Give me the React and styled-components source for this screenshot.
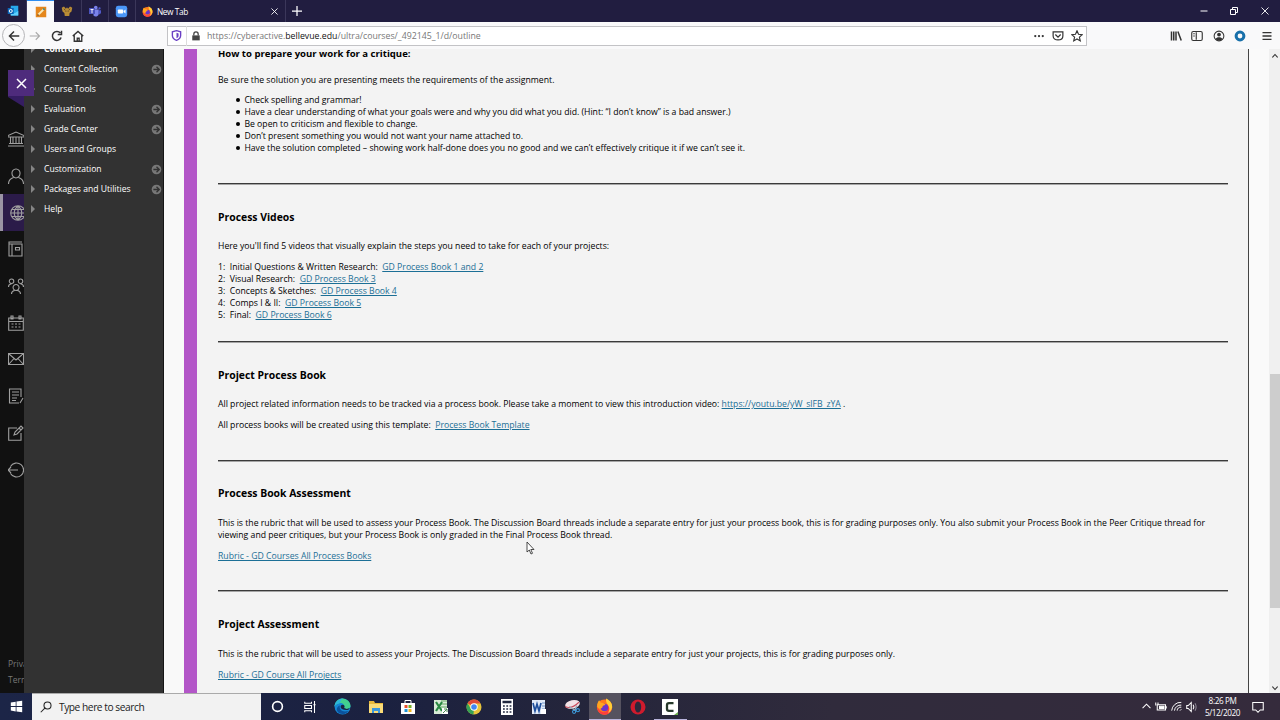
import React from 'react';
import styled, { createGlobalStyle, css } from 'styled-components';

const fonts = {
  page: '"Open Sans", "Noto Sans", sans-serif',
  system: '"Open Sans", "Noto Sans", sans-serif',
};

const colors = {
  titleBar: '#211d40',
  rail: '#111111',
  menu: '#323232',
  purple: '#b356c8',
  link: '#1c6f96',
  page: '#f3f3f3',
};

const GlobalStyle = createGlobalStyle`
  body { margin: 0; overflow: hidden; }
  * { box-sizing: border-box; }
  svg { display: block; flex: none; }
`;

const Screen = styled.div`
  position: relative;
  width: 1280px;
  height: 720px;
  display: flex;
  flex-direction: column;
  overflow: hidden;
  font-family: ${fonts.page};
  font-size: 9px;
`;

/* Browser tabs */
const TitleBar = styled.header`
  height: 22px;
  flex: none;
  display: flex;
  background: ${colors.titleBar};
  color: #fff;
`;

const PinnedTab = styled.div`
  width: 27.2px;
  display: flex;
  align-items: center;
  justify-content: center;
  border-right: 1px solid #3b375a;
  ${({ $active }) =>
    $active &&
    css`
      background: #f9f9fb;
      border-top: 1px solid #2d8cf0;
      border-right: none;
    `};
`;

const OpenTab = styled.div`
  width: 150px;
  display: flex;
  align-items: center;
  padding: 0 7px 0 6px;
  border-right: 1px solid #3b375a;
`;

const TabTitle = styled.span`
  flex: 1;
  padding: 1px 0 0 4px;
  font-size: 8.3px;
  letter-spacing: -0.4px;
`;

const NewTab = styled.div`
  width: 22px;
  display: flex;
  align-items: center;
  justify-content: center;
`;

const WindowControls = styled.div`
  margin-left: auto;
  display: flex;
  align-items: center;
  gap: 22.5px;
  padding-right: 11.5px;
`;

/* Browser toolbar */
const Toolbar = styled.div`
  height: 27px;
  flex: none;
  display: flex;
  align-items: center;
  background: #f9f9fa;
  color: #333;
`;

const BackButton = styled.div`
  width: 23px;
  height: 23px;
  margin-left: 2px;
  display: flex;
  align-items: center;
  justify-content: center;
  border: 1px solid #b5b5b8;
  border-radius: 50%;
`;

const NavIcons = styled.div`
  width: 142px;
  display: flex;
  align-items: center;
  padding-left: 4px;
  gap: 9.5px;
`;

const AddressBar = styled.div`
  width: 920px;
  height: 20px;
  display: flex;
  align-items: center;
  padding: 0 3px;
  border: 1px solid #c3c3c6;
  background: #fff;
`;

const Separator = styled.i`
  width: 1px;
  height: 20px;
  margin: 0 4px;
  background: #ddd;
`;

const Url = styled.span`
  flex: 1;
  padding: 1px 0 0 6px;
  font-size: 8.75px;
  color: #777;
  b { font-weight: 400; color: #111; }
`;

const AddressActions = styled.div`
  display: flex;
  align-items: center;
  gap: 7px;
`;

const ToolbarActions = styled.div`
  margin-left: auto;
  display: flex;
  align-items: center;
  gap: 9.5px;
  padding-right: 7px;
  > :last-child { margin-left: 5.5px; }
`;

/* Page */
const Viewport = styled.main`
  height: 644px;
  flex: none;
  display: flex;
  overflow: hidden;
`;

const Rail = styled.nav`
  width: 24px;
  flex: none;
  display: flex;
  flex-direction: column;
  background: ${colors.rail};
  padding-top: 72px;
  overflow: hidden;
`;

const RailItem = styled.div`
  height: 36.7px;
  flex: none;
  display: flex;
  align-items: center;
  padding-left: 8px;
  color: #a0a0a0;
  ${({ $active }) =>
    $active &&
    css`
      background: #2b1b49;
      border-left: 3px solid #9a94a4;
      padding-left: 7px;
    `};
`;

const RailLinks = styled.div`
  margin-top: auto;
  padding: 0 0 6px 8px;
  font-size: 8.5px;
  line-height: 15.3px;
  color: #777;
  white-space: nowrap;
`;

const CloseFlag = styled.div`
  position: absolute;
  left: 8px;
  top: 70px;
  width: 26px;
  height: 38px;
`;

const CourseMenu = styled.aside`
  width: 140px;
  flex: none;
  background: ${colors.menu};
  border-right: 1px solid #151515;
  overflow: hidden;
`;

const MenuList = styled.ul`
  list-style: none;
  margin: -10px 0 0;
  padding: 0;
`;

const MenuItem = styled.li`
  height: 20px;
  display: flex;
  align-items: center;
  padding: 0 1px 0 6px;
  color: #fff;
  font-size: 8.6px;
  font-weight: ${({ $bold }) => ($bold ? 700 : 400)};
`;

const MenuLabel = styled.span`
  flex: 1;
  padding-left: 9px;
`;

const Gutter = styled.div`
  width: 20px;
  flex: none;
  background: #f9f9f9;
`;

const Content = styled.article`
  width: 1065px;
  flex: none;
  padding: 0 20px 0 21px;
  border-left: 13px solid ${colors.purple};
  border-right: 1px solid #444;
  background: ${colors.page};
  color: #000;
  overflow: hidden;
`;

const Section = styled.section`
  & + & {
    border-top: 1px solid #3a3a3a;
    box-shadow: inset 0 1px #a5a5a5;
  }
`;

const Heading = styled.h3`
  margin: 0;
  padding-top: ${({ $first }) => ($first ? 0 : '24.5px')};
  margin-top: ${({ $first }) => ($first ? '-3.4px' : 0)};
  font-size: ${({ $first }) => ($first ? '9.55px' : '10.4px')};
  line-height: 16px;
  font-weight: 700;
`;

const Text = styled.p`
  margin: ${({ $top = 8.7 }) => $top}px 0 0;
  font-size: 8.68px;
  line-height: 12px;
  white-space: pre-wrap;
`;

const Bullets = styled.ul`
  list-style: none;
  margin: 8.8px 0 0;
  padding-left: 18px;
  font-size: 8.68px;
  line-height: 12px;
`;

const Bullet = styled.li`
  display: flex;
  align-items: center;
  gap: 4.4px;
  &::before {
    content: '';
    width: 4px;
    height: 4px;
    border-radius: 50%;
    background: #000;
  }
`;

const SectionEnd = styled.div`
  height: ${({ $height }) => $height}px;
`;

const Link = styled.a`
  color: ${colors.link};
  text-decoration: underline;
`;

const RightMargin = styled.div`
  flex: 1;
  background: #fafafa;
`;

const Scrollbar = styled.div`
  width: 11px;
  flex: none;
  display: flex;
  flex-direction: column;
  align-items: center;
  padding: 4px 0 2px;
  background: #f0f0f0;
  color: #333;
`;

const Thumb = styled.div`
  width: 10px;
  height: 234px;
  margin: 315px 0 auto;
  background: #cdcdcd;
`;

/* Windows taskbar */
const Taskbar = styled.footer`
  height: 27px;
  flex: none;
  display: flex;
  background: linear-gradient(90deg, #1c2547 0, #1b2140 30%, #24253b 45%, #302b3c 65%, #352b3c 100%);
  color: #fff;
  font-family: ${fonts.system};
`;

const StartButton = styled.div`
  width: 32px;
  display: flex;
  align-items: center;
  justify-content: center;
`;

const SearchBox = styled.div`
  width: 229px;
  display: flex;
  align-items: center;
  gap: 7px;
  padding-left: 8px;
  background: #f2f2f2;
  border-top: 1px solid #aaa;
  color: #222;
  font-size: 10.2px;
  letter-spacing: -0.45px;
`;

const TaskButton = styled.div`
  width: 32.75px;
  display: flex;
  align-items: center;
  justify-content: center;
  padding-top: 1px;
  border-bottom: 1px solid ${({ $running }) => ($running ? '#b9b4dc' : 'transparent')};
  background: ${({ $active }) => ($active ? '#55525f' : 'transparent')};
`;

const Tray = styled.div`
  margin-left: auto;
  display: flex;
  align-items: center;
  gap: 4px;
`;

const Clock = styled.div`
  width: 38px;
  margin: 0 0 0 2px;
  text-align: center;
  font-size: 8.2px;
  line-height: 12px;
  letter-spacing: -0.4px;
  white-space: nowrap;
`;

const Notifications = styled.div`
  width: 25px;
  height: 27px;
  display: flex;
  align-items: center;
  justify-content: center;
  margin-right: 9.5px;
`;

const Pointer = styled.svg`
  position: absolute;
  left: 526px;
  top: 541px;
`;

const Line = ({ size = 12, box = 16, width = 1.4, children }) => (
  <svg
    width={size}
    height={size}
    viewBox={`0 0 ${box} ${box}`}
    fill="none"
    stroke="currentColor"
    strokeWidth={width}
  >
    {children}
  </svg>
);

const Art = ({ size = 14, children }) => (
  <svg width={size} height={size} viewBox="0 0 16 16">
    {children}
  </svg>
);

const Firefox = ({ size }) => (
  <Art size={size}>
    <circle cx="8" cy="8.5" r="7.2" fill="#ff7a1a" />
    <path d="M8 1c4 1 7.500 4 7.200 8S11.500 16 8 15.700C3 15.500 1 12 1.200 8c2 5 5 6 8 5 4-2 2-8-1-12z" fill="#ff3d3d" />
    <path d="M9.500.500c4 2 6 5 5.700 8.500-.5 3-2.500 4.500-4 5 2-3 1.500-5 .3-7C10 5 9 3 9.500.500z" fill="#ffcf36" />
    <circle cx="8" cy="9" r="3.500" fill="#6b35c9" />
    <path d="M1.200 8C1 5 2 3 3 2l1.500 2.500C6 4 8 5 9 6.500 7 6.500 6 7.500 6 9 3.500 11 2 10 1.200 8z" fill="#ffa51f" />
  </Art>
);

const Outlook = () => (
  <Art size={12}>
    <path d="M5 1h10v13H5z" fill="#28a8ea" />
    <path d="M5 8l5 3 5-3v6H5z" fill="#5cd1ff" />
    <path d="M1 4h8v8H1z" fill="#0a66b8" />
    <circle cx="5" cy="8" r="2" fill="none" stroke="#fff" strokeWidth="1.300" />
  </Art>
);

const Pencil = () => (
  <Art size={12}>
    <path d="M1 1h14v14H1z" fill="#e5861c" />
    <path d="M4.500 11.500l7-7" stroke="#fbe9b8" strokeWidth="2.800" />
    <path d="M11 5l1.500-1.500" stroke="#3f8f86" strokeWidth="2.800" />
    <path d="M3 13l.8-2.500 1.700 1.700z" fill="#5a4a35" />
  </Art>
);

const Crest = () => (
  <Art size={12}>
    <path d="M1 3.500L4 2l2.500 3L8 3l1.500 2L12 2l3 1.500-1 5-2.500 2-.5 4H5l-.5-4L2 8.500z" fill="#b98c35" />
    <path d="M6.500 7.500v1.500M9.500 7.500v1.500M4 5l1.500 2M12 5l-1.500 2" stroke="#4b3826" fill="none" />
  </Art>
);

const Teams = () => (
  <Art size={12}>
    <circle cx="9" cy="3.500" r="2.500" fill="#7b83eb" />
    <circle cx="14" cy="4.500" r="1.500" fill="#5059c9" />
    <path d="M6 6h7v6a4 4 0 0 1-7 2z" fill="#7b83eb" />
    <path d="M13 7h3v4l-3 2z" fill="#5059c9" />
    <path d="M0 4h8v8H0z" fill="#4b53bc" />
    <path d="M2 6h4M4 6v5" stroke="#fff" strokeWidth="1.200" />
  </Art>
);

const Zoom = () => (
  <Art size={13}>
    <rect x="1" y="1" width="14" height="14" rx="3" fill="#4a96f8" />
    <rect x="3.500" y="5.500" width="6.500" height="5" rx="1" fill="#fff" />
    <path d="M10.500 7.500L13 5.500v5l-2.500-2z" fill="#fff" />
  </Art>
);

const CircleArrow = () => (
  <svg width="11" height="11" viewBox="0 0 16 16">
    <circle cx="8" cy="8" r="7" fill="#777" />
    <path d="M3.500 8h8M8 4l4 4-4 4" fill="none" stroke="#323232" strokeWidth="2" />
  </svg>
);

const railIcons = [
  <path key="bank" d="M0 4.500L8 1l8 3.500v1.500H0zM2.500 6v6M5 6v6M8 6v6M11 6v6M13.500 6v6M1 12.500h14M0 15h16" />,
  <path key="user" d="M8 1a4 4 0 0 1 4 4.500C12 8 10 10 8 10S4 8 4 5.500A4 4 0 0 1 8 1zM.500 16c0-4 2-5.500 5-6.500M15.500 16c0-4-2-5.500-5-6.500" />,
  <path key="globe" d="M8 .700a7.300 7.300 0 1 0 0 14.600A7.300 7.300 0 0 0 8 .700zM8 1v14M1 8h14M2 4.500h12M2 11.500h12M8 1C3 5 3 11 8 15M8 1c5 4 5 10 0 14" />,
  <path key="book" d="M1 3V1h13M1 3h13v12H1zM4 3v12M7.500 6.500h4v2.500h-4z" />,
  <path key="groups" d="M3.500 1a2 2 0 1 0 .1 4.500A2 2 0 0 0 3.500 1zM12.500 1a2 2 0 1 0 .1 4.500A2 2 0 0 0 12.500 1zM8 6.500a3 3 0 1 0 .1 6A3 3 0 0 0 8 6.500zM.500 9c0-2 1-3 3-3M15.500 9c0-2-1-3-3-3M3.500 16c0-2 1-3 3-3.500M12.500 16c0-2-1-3-3-3.500" />,
  <path key="calendar" d="M.700 3h14.600v12.300H.700zM.700 6.500h14.600M3 1h2v3H3zM11 1h2v3h-2zM3.500 9h2M7 9h2M10.500 9h2M3.500 12h2M7 12h2M10.500 12h2" />,
  <path key="mail" d="M.500 2.500h15v11H.500zM1 3l7 6 7-6M1 13l5-5.500M15 13l-5-5.500" />,
  <path key="grades" d="M13 9V1H1.500v14H11M4 4h7M4 7h7M4 10h5M4 12.500h4M15 10l-3 5" />,
  <path key="tools" d="M9 3H.700v12.300H13V8M6 10l1-3 6-6 2 2-6 6zM11 3l2 2" />,
  <path key="signout" d="M2.500 4.500A7 7 0 1 1 2.500 11.500M10 8H0M3 5L0 8l3 3" />,
];

const menuItems = [
  { label: 'Control Panel', bold: true },
  { label: 'Content Collection', arrow: true },
  { label: 'Course Tools' },
  { label: 'Evaluation', arrow: true },
  { label: 'Grade Center', arrow: true },
  { label: 'Users and Groups' },
  { label: 'Customization', arrow: true },
  { label: 'Packages and Utilities', arrow: true },
  { label: 'Help' },
];

const bullets = [
  'Check spelling and grammar!',
  'Have a clear understanding of what your goals were and why you did what you did. (Hint: “I don’t know” is a bad answer.)',
  'Be open to criticism and flexible to change.',
  'Don’t present something you would not want your name attached to.',
  'Have the solution completed – showing work half-done does you no good and we can’t effectively critique it if we can’t see it.',
];

const videos = [
  ['1:  Initial Questions & Written Research:  ', 'GD Process Book 1 and 2'],
  ['2:  Visual Research:  ', 'GD Process Book 3'],
  ['3:  Concepts & Sketches:  ', 'GD Process Book 4'],
  ['4:  Comps I & II:  ', 'GD Process Book 5'],
  ['5:  Final:  ', 'GD Process Book 6'],
];

const Edge = () => (
  <Art size={17}>
    <circle cx="8" cy="8" r="7.500" fill="#1687d4" />
    <path d="M.500 8C1 2 6 0 9 .600c4 .500 7 4 6.500 7.400-.5 2.500-4 3-6 1.500C11 7 8 4 5 5c-2 .500-4 1.500-4.500 3z" fill="#42cf8f" />
    <path d="M.500 7C2 2 6 .500 9 .600 5 2 7 3.500 5 5 3 5.500 1.500 6 .500 8z" fill="#2bb5e0" />
    <path d="M5.500 7c-1 4 3 7 8 5-2 4-8 4-10 1-1.500-2-1-5 2-6z" fill="#0b529c" />
    <path d="M9.500 9.500C11 7 8.500 5.500 6.500 7c-1 2 1 5 7 4l1.500-1.500c-2 1-4 1-5.500 0z" fill="#1c2340" />
  </Art>
);

const tasks = [
  { name: 'cortana', icon: <Line size={13} width={2}><circle cx="8" cy="8" r="6" /></Line> },
  {
    name: 'taskview',
    icon: <Line size={12}><path d="M1 1v2h9V1M1 15v-2h9v2M1 6h9v4H1zM14 0v16M12.500 5h3" /></Line>,
  },
  { name: 'edge', icon: <Edge /> },
  {
    name: 'explorer',
    icon: (
      <Art size={16}>
        <path d="M1 2h5l1 2h8v10H1z" fill="#e9b93b" />
        <path d="M1 5h14v9H1z" fill="#fbdc78" />
        <path d="M4 9h8v5h-2v-2H6v2H4z" fill="#3d98db" />
      </Art>
    ),
  },
  {
    name: 'store',
    icon: (
      <Art size={16}>
        <path d="M5 5V1.500h6V5" fill="none" stroke="#fff" />
        <path d="M1 4h14v11H1z" fill="#fff" />
        <path d="M4.500 6H7.500v3h-3z" fill="#e74f2c" />
        <path d="M8.500 6h3v3h-3z" fill="#73ad24" />
        <path d="M4.500 10h3v3h-3z" fill="#2095d6" />
        <path d="M8.500 10h3v3h-3z" fill="#efb31f" />
      </Art>
    ),
  },
  {
    name: 'excel',
    icon: (
      <Art size={16}>
        <path d="M1 1h13v14H1z" fill="#d9ecd7" />
        <path d="M8 2h6M8 5h6M8 8h6" stroke="#65a864" />
        <path d="M3 3l6 9M9 3l-6 9" stroke="#2a8a43" strokeWidth="2.200" />
        <path d="M9 9h6v6H9z" fill="#fff" />
        <path d="M10 14l4-4M11 10h3v3" stroke="#4a8752" fill="none" />
      </Art>
    ),
  },
  {
    name: 'chrome',
    icon: (
      <Art size={16}>
        <circle cx="8" cy="8" r="7.500" fill="#e7c43b" />
        <path d="M8 8L1.500 4.200A7.500 7.500 0 0 1 14.500 4.500H8z" fill="#e04a3a" />
        <path d="M8 8l-.5 7.500A7.500 7.500 0 0 1 1.500 4.200L5 10z" fill="#35a256" />
        <circle cx="8" cy="8" r="3.700" fill="#fff" />
        <circle cx="8" cy="8" r="2.800" fill="#4285f4" />
      </Art>
    ),
  },
  {
    name: 'calculator',
    icon: (
      <Art size={16}>
        <path d="M2 0h12v16H2z" fill="#fff" />
        <path d="M3.500 3h9" stroke="#222840" strokeWidth="2.500" />
        <path d="M4 7h8.500M4 10h8.500M4 13h8.500" stroke="#222840" strokeWidth="1.600" strokeDasharray="1.800 1.500" />
      </Art>
    ),
  },
  {
    name: 'word',
    icon: (
      <Art size={16}>
        <path d="M1 1h13v14H1z" fill="#e2ebf8" />
        <path d="M11 4h3M11 7h3M11 10h3" stroke="#6f95c9" />
        <path d="M2 4l2 8 2-7 2 7 2-8" fill="none" stroke="#1e4f9d" strokeWidth="1.700" />
        <path d="M10 10h5v5h-5z" fill="#fff" />
      </Art>
    ),
  },
  {
    name: 'snip',
    icon: (
      <Art size={17}>
        <ellipse cx="8" cy="6" rx="7" ry="4" fill="#f3e3e7" transform="rotate(-12 8 6)" />
        <path d="M1 8c4 2 9 0 13-4" fill="none" stroke="#c84b5a" />
        <path d="M5 8l6 4M12 7l-2 5" stroke="#9cabba" strokeWidth="1.200" />
        <circle cx="9.500" cy="13" r="1.500" fill="none" stroke="#3c9bdc" />
        <circle cx="13" cy="11.500" r="1.500" fill="none" stroke="#3c9bdc" />
      </Art>
    ),
  },
  { name: 'firefox', icon: <Firefox size={17} />, active: true, running: true },
  {
    name: 'opera',
    icon: (
      <Art size={16}>
        <circle cx="8" cy="8" r="7.500" fill="#cf1b2d" />
        <ellipse cx="8" cy="8" rx="3.200" ry="5.600" fill="#2b283b" />
      </Art>
    ),
  },
  {
    name: 'camtasia',
    icon: (
      <Art size={16}>
        <path d="M0 0h16v16H0z" fill="#fff" />
        <path d="M11.500 4.200H7Q5 4.200 5 6v4q0 1.800 2 1.800h4.500" fill="none" stroke="#26382a" strokeWidth="2.300" />
        <path d="M12 16l4-3v3z" fill="#6cae4c" />
      </Art>
    ),
    running: true,
  },
];

const App = () => (
  <>
    <GlobalStyle />
    <Screen>
      <TitleBar>
        <PinnedTab><Outlook /></PinnedTab>
        <PinnedTab $active><Pencil /></PinnedTab>
        <PinnedTab><Crest /></PinnedTab>
        <PinnedTab><Teams /></PinnedTab>
        <PinnedTab><Zoom /></PinnedTab>
        <OpenTab>
          <Firefox size={11} />
          <TabTitle>New Tab</TabTitle>
          <Line size={7} width={2}><path d="M1 1l14 14M15 1L1 15" /></Line>
        </OpenTab>
        <NewTab><Line size={10} width={2}><path d="M8 0v16M0 8h16" /></Line></NewTab>
        <WindowControls>
          <Line size={8} width={2}><path d="M1 8h14" /></Line>
          <Line size={8} width={2}><path d="M1 5h10v10H1zM5 5V1h10v10h-4" /></Line>
          <Line size={8} width={1.800}><path d="M1 1l14 14M15 1L1 15" /></Line>
        </WindowControls>
      </TitleBar>

      <Toolbar>
        <BackButton>
          <Line size={12} width={2}><path d="M15 8H2M8 2L2 8l6 6" /></Line>
        </BackButton>
        <NavIcons>
          <Line size={12} width={1.500}><path stroke="#aaa" d="M1 8h13M9 3l5 5-5 5" /></Line>
          <Line size={12} width={2}><path d="M13.500 10a6 6 0 1 1-1-6M14 1v5H9" /></Line>
          <Line size={12} width={1.800}><path d="M1 8l7-6 7 6M3 7v8h10V7M7 15v-4h2.500v4" /></Line>
        </NavIcons>
        <AddressBar>
          <Line size={11} width={2}>
            <path stroke="#6a3fc4" d="M8 1l6 1.500V8c0 4-3 6-6 7-3-1-6-3-6-7V2.500z" />
            <path fill="#6a3fc4" stroke="none" d="M8 4v8c2-1 3-2 3-4V5z" />
          </Line>
          <Separator />
          <Art size={10}>
            <path d="M2 7h12v8H2z" fill="#444" />
            <path d="M4.500 7V5a3.500 3.500 0 0 1 7 0v2" fill="none" stroke="#444" strokeWidth="2" />
          </Art>
          <Url>https://cyberactive.<b>bellevue.edu</b>/ultra/courses/_492145_1/d/outline</Url>
          <AddressActions>
            <Line size={12}>
              <g fill="currentColor" stroke="none"><circle cx="3" cy="8" r="1.500" /><circle cx="8" cy="8" r="1.500" /><circle cx="13" cy="8" r="1.500" /></g>
            </Line>
            <Line size={12} width={1.600}><path d="M1.500 2.500h13V8c0 7-13 7-13 0zM4.500 6L8 9.500 11.500 6" /></Line>
            <Line size={12} width={1.500}><path d="M8 1l2 4.700 5 .500-3.800 3.300 1.200 5L8 12l-4.400 2.500 1.200-5L1 6.200l5-.5z" /></Line>
          </AddressActions>
        </AddressBar>
        <ToolbarActions>
          <Line size={12} width={2}><path d="M2 2v12M5 2v12M8 2v12M10.500 2l4.500 12" /></Line>
          <Line size={12} width={1.500}><rect x="1" y="2" width="14" height="12" rx="2" /><path d="M7 3v10M3 5h2M3 8h2" /></Line>
          <Line size={12}><circle cx="8" cy="8" r="6.500" /><circle cx="8" cy="6" r="2.500" fill="currentColor" stroke="none" /><path d="M3.500 12c1-3 8-3 9 0l-2 2h-5z" fill="currentColor" stroke="none" /></Line>
          <Line size={12} width={4}><circle stroke="#1870aa" cx="8" cy="8" r="5.200" /></Line>
          <Line size={12} width={1.800}><path d="M2 3.500h12M2 8h12M2 12.500h12" /></Line>
        </ToolbarActions>
      </Toolbar>

      <Viewport>
        <Rail>
          {railIcons.map((icon, index) => (
            <RailItem key={icon.key} $active={index === 2}>
              <Line size={16} width={1.100}>{icon}</Line>
            </RailItem>
          ))}
          <RailLinks>
            Privacy
            <br />
            Terms
          </RailLinks>
        </Rail>
        <CourseMenu>
          <MenuList>
            {menuItems.map(({ label, bold, arrow }) => (
              <MenuItem key={label} $bold={bold}>
                <svg width="5" height="8" viewBox="0 0 5 8"><path d="M1 0l4 4-4 4z" fill="#858585" /></svg>
                <MenuLabel>{label}</MenuLabel>
                {arrow && <CircleArrow />}
              </MenuItem>
            ))}
          </MenuList>
        </CourseMenu>
        <Gutter />
        <Content>
          <Section>
            <Heading $first>How to prepare your work for a critique:</Heading>
            <Text $top={12}>Be sure the solution you are presenting meets the requirements of the assignment.</Text>
            <Bullets>
              {bullets.map(item => <Bullet key={item}>{item}</Bullet>)}
            </Bullets>
            <SectionEnd $height={28.6} />
          </Section>
          <Section>
            <Heading>Process Videos</Heading>
            <Text $top={15.5}>Here you'll find 5 videos that visually explain the steps you need to take for each of your projects:</Text>
            <Text $top={9}>
              {videos.map(([label, title]) => (
                <React.Fragment key={title}>
                  {label}
                  <Link>{title}</Link>
                  <br />
                </React.Fragment>
              ))}
            </Text>
            <SectionEnd $height={20.2} />
          </Section>
          <Section>
            <Heading>Project Process Book</Heading>
            <Text $top={15.6}>
              All project related information needs to be tracked via a process book. Please take a moment to view this introduction video: <Link>https://youtu.be/yW_slFB_zYA</Link> .
            </Text>
            <Text $top={9}>All process books will be created using this template:  <Link>Process Book Template</Link></Text>
            <SectionEnd $height={28.5} />
          </Section>
          <Section>
            <Heading>Process Book Assessment</Heading>
            <Text $top={15.9}>
              This is the rubric that will be used to assess your Process Book. The Discussion Board threads include a separate entry for just your process book, this is for grading purposes only. You also submit your Process Book in the Peer Critique thread for
              <br />
              viewing and peer critiques, but your Process Book is only graded in the Final Process Book thread.
            </Text>
            <Text><Link>Rubric - GD Courses All Process Books</Link></Text>
            <SectionEnd $height={28.6} />
          </Section>
          <Section>
            <Heading>Project Assessment</Heading>
            <Text $top={15.9}>
              This is the rubric that will be used to assess your Projects. The Discussion Board threads include a separate entry for just your projects, this is for grading purposes only.
            </Text>
            <Text><Link>Rubric - GD Course All Projects</Link></Text>
          </Section>
        </Content>
        <RightMargin />
        <Scrollbar>
          <Line size={6} width={3}><path d="M1 12l7-8 7 8" /></Line>
          <Thumb />
          <Line size={6} width={3}><path d="M1 4l7 8 7-8" /></Line>
        </Scrollbar>
      </Viewport>

      <Taskbar>
        <StartButton>
          <Art size={13}><path d="M1 3l6-1v5.500H1zM8 1.800L15 1v6.500H8zM1 8.500h6V14l-6-1zM8 8.500h7V15l-7-.8z" fill="#fff" /></Art>
        </StartButton>
        <SearchBox>
          <Line size={12}><circle cx="10" cy="6" r="4.700" /><path d="M6.500 9.500L1 15" /></Line>
          Type here to search
        </SearchBox>
        {tasks.map(({ name, icon, active, running }) => (
          <TaskButton key={name} $active={active} $running={running}>{icon}</TaskButton>
        ))}
        <Tray>
          <Line size={9} width={1.800}><path d="M1 11l7-7 7 7" /></Line>
          <Line size={12}><path d="M3 5h11v7H3zM1 2v4M4 2v3M15 7v3" /><path d="M6 7h6v3H6z" fill="currentColor" /></Line>
          <Line size={11}><path d="M1 14A13 13 0 0 1 15 2M5 14a9 9 0 0 1 10-8M9 14a5 5 0 0 1 6-5M13 14l2-2" /></Line>
          <Line size={12}><path d="M1 6h2l4-4v12l-4-4H1zM9.500 5q2 3 0 6" /><path d="M12 3q3 5 0 10" stroke="#8d8794" /></Line>
          <Clock>
            8:26 PM
            <br />
            5/12/2020
          </Clock>
          <Notifications>
            <Line size={12}><path d="M1 2h14v10h-4l-3 3-3-3H1z" /></Line>
          </Notifications>
        </Tray>
      </Taskbar>

      <CloseFlag>
        <svg width="26" height="38" viewBox="0 0 26 38">
          <path d="M0 25h16v12L0 27z" fill="#351d62" />
          <path d="M0 0h26v26H0z" fill="#4e2b7c" />
          <path d="M9 9l9 9M18 9l-9 9" stroke="#fff" strokeWidth="1.500" />
        </svg>
      </CloseFlag>
      <Pointer width="9" height="14" viewBox="0 0 9 14">
        <path d="M1 1v10l2.300-2 1.700 4 1.500-.700-1.700-3.800H8z" fill="#fff" stroke="#222" strokeWidth=".8" />
      </Pointer>
    </Screen>
  </>
);

export default App;
